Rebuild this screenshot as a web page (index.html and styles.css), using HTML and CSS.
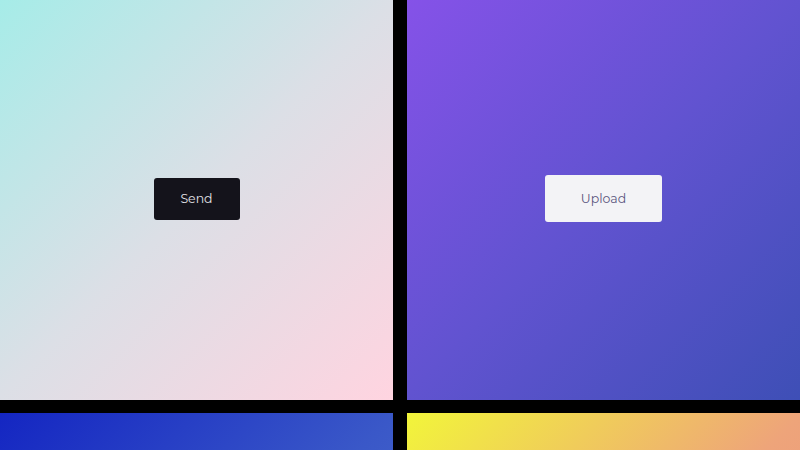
FILE: index.html
```
<!DOCTYPE html>
<html>
<head>
<meta charset="utf-8">
<link rel="stylesheet" href="styles.css">
</head>
<body>
<div class="grid">
  <section class="panel p1"><button class="btn btn-dark">Send</button></section>
  <section class="panel p2"><button class="btn btn-light">Upload</button></section>
  <section class="panel p3"></section>
  <section class="panel p4"></section>
</div>
</body>
</html>
```
FILE: styles.css
```
html, body {
  margin: 0;
  padding: 0;
  background: #000;
  overflow: hidden;
}
.grid {
  display: grid;
  grid-template-columns: 393px 393px;
  grid-template-rows: 400px 400px;
  column-gap: 14px;
  row-gap: 13px;
  width: 800px;
  height: 450px;
  overflow: hidden;
}
.panel {
  display: flex;
  align-items: center;
  justify-content: center;
}
.p1 { background: linear-gradient(135deg, #a6ece8 0%, #dcdfe6 50%, #ffd4e0 100%); }
.p2 { background: linear-gradient(135deg, #8552e8 0%, #6153d0 50%, #3e4fb6 100%); }
.p3 { background: linear-gradient(135deg, #1426c2 0%, #3a58c8 50%, #5a7ad0 100%); }
.p4 { background: linear-gradient(135deg, #f2f53a 0%, #eea47a 50%, #e88a80 100%); }
.btn {
  font-family: "Montserrat", "Lato", "Noto Sans", sans-serif;
  font-size: 12.5px;
  border: none;
  border-radius: 3px;
  padding: 0;
  margin-bottom: 3px;
  cursor: pointer;
}
.btn-dark {
  width: 86px;
  height: 42px;
  background: #14131b;
  color: #e2e2e8;
}
.btn-light {
  width: 117px;
  height: 47px;
  background: #f3f3f6;
  color: #5b557f;
}
```
